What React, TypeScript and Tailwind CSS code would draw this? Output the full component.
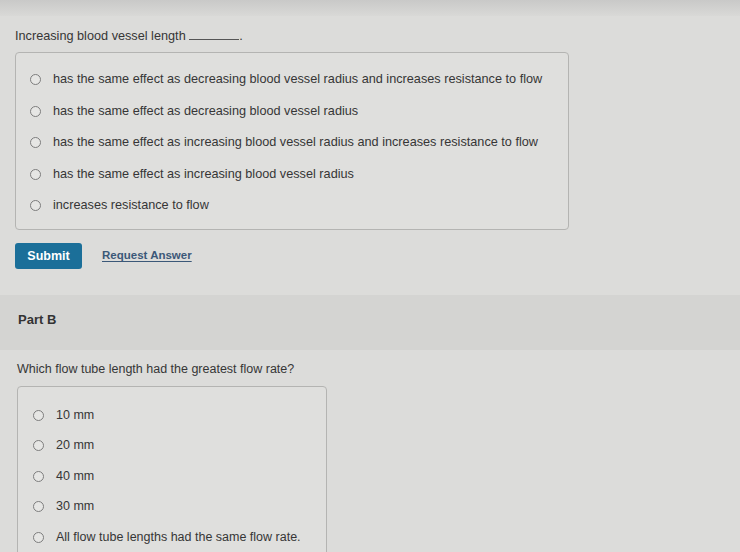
const partA = [
  'has the same effect as decreasing blood vessel radius and increases resistance to flow',
  'has the same effect as decreasing blood vessel radius',
  'has the same effect as increasing blood vessel radius and increases resistance to flow',
  'has the same effect as increasing blood vessel radius',
  'increases resistance to flow',
]

const partB = ['10 mm', '20 mm', '40 mm', '30 mm', 'All flow tube lengths had the same flow rate.']

function Radio() {
  return (
    <span className="block h-[11px] w-[11px] shrink-0 rounded-full border-[1.5px] border-[#7d7d7d] bg-[#e6e6e4]" />
  )
}

export default function App() {
  return (
    <div className="h-[552px] w-[740px] overflow-hidden bg-[#dcdcda] font-['Liberation_Sans',Arial,sans-serif] text-[12.7px] text-[#363636]">
      <div className="h-[16px] bg-gradient-to-b from-[#c9c9c8] to-[#d9d9d7]" />

      <div className="pl-[15px]">
        <p className="mt-[13px] leading-[14px]">
          Increasing blood vessel length{' '}
          <span className="inline-block w-[50px] border-b border-[#555] align-baseline" />.
        </p>

        <div className="mt-[9px] h-[178px] w-[554px] rounded-[4px] border border-[#b4b4b2] bg-[#dfdfdd] pl-[14px] pt-[11px]">
          {partA.map((t) => (
            <div key={t} className="flex h-[31.5px] items-center gap-[12px]">
              <Radio />
              <span>{t}</span>
            </div>
          ))}
        </div>

        <div className="mt-[13px] flex items-center gap-[20px]">
          <button className="h-[26px] w-[67px] rounded-[3px] bg-[#1b6f99] text-[12.5px] font-bold text-white">
            Submit
          </button>
          <a className="text-[11.5px] font-bold text-[#3b5878] underline underline-offset-2">Request Answer</a>
        </div>
      </div>

      <div className="mt-[26px] h-[55px] bg-[#d4d4d2] pl-[18px] pt-[15px]">
        <span className="text-[13px] font-bold text-[#333]">Part B</span>
      </div>

      <div className="pl-[17px] text-[12.5px]">
        <p className="mt-[12px] leading-[14px]">Which flow tube length had the greatest flow rate?</p>

        <div className="mt-[10px] h-[200px] w-[310px] rounded-[4px] border border-[#b4b4b2] bg-[#dfdfdd] pl-[15px] pt-[13px]">
          {partB.map((t) => (
            <div key={t} className="flex h-[30.5px] items-center gap-[12px]">
              <Radio />
              <span>{t}</span>
            </div>
          ))}
        </div>
      </div>
    </div>
  )
}
